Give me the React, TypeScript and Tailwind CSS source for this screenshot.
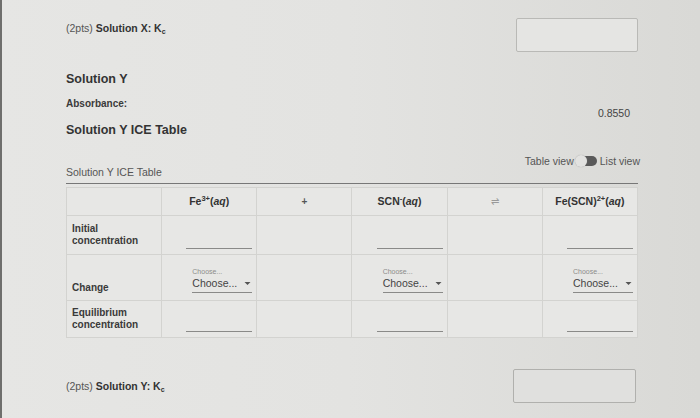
import React from 'react';

const font = { fontFamily: '"Liberation Sans", Arial, sans-serif' };

const Blank = () => (
  <div className="flex justify-end pr-[4px] pb-[5px]">
    <div className="w-[66px] border-b border-[#8a8a88]" />
  </div>
);

const Choose = () => (
  <div className="flex justify-end pr-[4px] pb-[7px]">
    <div className="w-[60px]">
      <div className="text-[7px] leading-[9px] text-[#8c8c8a]">Choose...</div>
      <div className="flex items-center justify-between border-b border-[#8a8a88] pb-[2px] text-[10.5px] leading-[14px] text-[#444]">
        <span>Choose...</span>
        <svg width="7" height="5" viewBox="0 0 7 5" className="mr-[1px]">
          <path d="M0.5 1 L3.5 4 L6.5 1 Z" fill="#555" />
        </svg>
      </div>
    </div>
  </div>
);

export default function App() {
  const cell = 'border border-[#d3d3d0] bg-[#e7e7e5] p-0';
  const val = `${cell} align-bottom`;
  const head = `${cell} text-center text-[10.5px] font-semibold text-[#333]`;
  const rowLabel = 'text-[10px] leading-[12px] font-bold text-[#3a3a3a] px-[5px]';
  return (
    <div style={font} className="relative h-[418px] w-[700px] overflow-hidden bg-gradient-to-r from-[#e6e6e4] via-[#e3e3e1] to-[#d9d9d6]">
      <div className="absolute left-0 top-0 h-full w-[2px] bg-[#6f6f6d]" />
      <div className="ml-[66px] w-[572px]">
        <div className="flex items-start justify-between pt-[18px]">
          <div className="pt-[3px] text-[10.5px] text-[#333]">
            <span className="text-[#555]">(2pts)</span>{' '}
            <span className="font-bold">Solution X: K<sub className="text-[7px]">c</sub></span>
          </div>
          <div className="h-[34px] w-[122px] rounded-[2px] border border-[#b9b9b6] bg-[#e5e5e3]" />
        </div>

        <div className="mt-[19px] text-[12.5px] font-bold leading-[16px] text-[#333]">Solution Y</div>
        <div className="mt-[10px] text-[10px] font-bold leading-[14px] text-[#3a3a3a]">Absorbance:</div>
        <div className="-mt-[5px] pr-[8px] text-right text-[10.5px] leading-[14px] text-[#444]">0.8550</div>
        <div className="mt-[2px] text-[12.5px] font-bold leading-[16px] text-[#333]">Solution Y ICE Table</div>

        <div className="mt-[16px] flex items-center justify-end gap-[3px] text-[10.5px] leading-[14px] text-[#555]">
          <span>Table view</span>
          <span className="relative inline-block h-[10px] w-[20px] rounded-full bg-[#5a5a5a]">
            <span className="absolute -left-[2px] -top-[1px] h-[12px] w-[12px] rounded-full bg-[#e2e2e0] shadow-[0_0_1px_#999]" />
          </span>
          <span className="-mr-[2px]">List view</span>
        </div>

        <div className="mt-[-3px] text-[10.5px] leading-[14px] text-[#555]">Solution Y ICE Table</div>
        <div className="mt-[4px] border-b border-[#777]" />

        <table className="mt-[3px] w-full table-fixed border-collapse">
          <tbody>
            <tr className="h-[28px]">
              <td className={cell} />
              <td className={head}>
                Fe<sup className="text-[7.5px]">3+</sup>(<i>aq</i>)
              </td>
              <td className={`${cell} text-center text-[10px] font-bold text-[#555]`}>+</td>
              <td className={head}>
                SCN<sup className="text-[7.5px]">-</sup>(<i>aq</i>)
              </td>
              <td className={`${cell} text-center text-[10px] text-[#999]`}>⇌</td>
              <td className={head}>
                Fe(SCN)<sup className="text-[7.5px]">2+</sup>(<i>aq</i>)
              </td>
            </tr>
            <tr className="h-[39px]">
              <td className={`${cell} align-top pt-[7px]`}>
                <div className={rowLabel}>Initial<br />concentration</div>
              </td>
              <td className={val}><Blank /></td>
              <td className={cell} />
              <td className={val}><Blank /></td>
              <td className={cell} />
              <td className={val}><Blank /></td>
            </tr>
            <tr className="h-[46px]">
              <td className={`${cell} align-bottom pb-[6px]`}>
                <div className={rowLabel}>Change</div>
              </td>
              <td className={val}><Choose /></td>
              <td className={cell} />
              <td className={val}><Choose /></td>
              <td className={cell} />
              <td className={val}><Choose /></td>
            </tr>
            <tr className="h-[37px]">
              <td className={`${cell} align-top pt-[6px]`}>
                <div className={rowLabel}>Equilibrium<br />concentration</div>
              </td>
              <td className={val}><Blank /></td>
              <td className={cell} />
              <td className={val}><Blank /></td>
              <td className={cell} />
              <td className={val}><Blank /></td>
            </tr>
          </tbody>
        </table>

        <div className="mt-[31px] flex items-start justify-between">
          <div className="pt-[10px] text-[10.5px] text-[#333]">
            <span className="text-[#555]">(2pts)</span>{' '}
            <span className="font-bold">Solution Y: K<sub className="text-[7px]">c</sub></span>
          </div>
          <div className="mr-[2px] h-[34px] w-[123px] rounded-[2px] border border-[#b0b0ad] bg-[#e0e0de]" />
        </div>
      </div>
    </div>
  );
}
